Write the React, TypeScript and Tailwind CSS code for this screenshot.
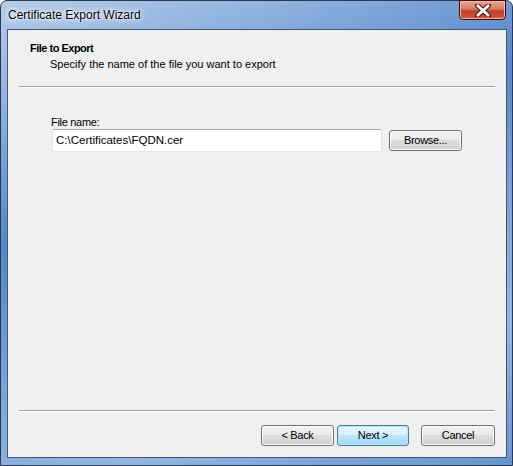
import React from "react";

const font = { fontFamily: '"Liberation Sans", Arial, sans-serif' };

function WinButton({ label, isDefault = false, className = "" }: { label: string; isDefault?: boolean; className?: string }) {
  return (
    <div
      className={
        "h-[21px] rounded-[3px] border flex items-center justify-center text-[11px] tracking-[-0.3px] text-black " +
        (isDefault
          ? "border-[#3c7fb1] shadow-[inset_0_0_0_1px_#b8e3fb] bg-[linear-gradient(#eaf6fd_0%,#d9f0fc_45%,#bee6fd_50%,#a7d9f5_100%)] "
          : "border-[#707070] shadow-[inset_0_0_0_1px_#fcfcfc] bg-[linear-gradient(#f2f2f2_0%,#ebebeb_45%,#dddddd_50%,#cfcfcf_100%)] ") +
        className
      }
    >
      {label}
    </div>
  );
}

export default function App() {
  return (
    <div className="w-[513px] h-[466px] bg-white" style={font}>
      <div className="w-[513px] h-[466px] flex flex-col rounded-t-[7px] border border-[#2b3a4f] bg-[linear-gradient(160deg,#b6cde9_0%,#8aaedd_18%,#5586c9_38%,#7aa1d8_58%,#94b5e2_78%,#6693d0_100%)] pl-[6px] pr-[5px] pb-[7px]">
        <div className="h-[28px] flex items-start shrink-0 relative">
          <div className="pl-[1px] pt-[7px] text-[12px] leading-[14px] text-black [text-shadow:0_0_8px_#ffffff,0_0_4px_#ffffff,0_0_2px_#ffffff]">
            Certificate Export Wizard
          </div>
          <div className="absolute right-[1px] top-[-1px] w-[47px] h-[20px] rounded-b-[4px] border border-[#3b0c06] bg-[linear-gradient(#e8a493_0%,#d77a65_45%,#c0402a_55%,#d2573e_100%)] shadow-[inset_0_0_0_1px_#f0b8a8] flex items-center justify-center">
            <svg width="16" height="13" viewBox="0 0 16 13">
              <path d="M2.5 1.5 L8 6.5 L13.5 1.5 M2.5 11.5 L8 6.5 L13.5 11.5" stroke="#4a1a12" strokeWidth="5" strokeLinecap="square" fill="none" />
              <path d="M3 2 L8 6.5 L13 2 M3 11 L8 6.5 L13 11" stroke="#ffffff" strokeWidth="2.8" strokeLinecap="square" fill="none" />
            </svg>
          </div>
        </div>
        <div className="flex-1 border border-[#44566e] bg-[#f0f0f0] flex flex-col">
          <div className="pl-[22px] pt-[10px] text-black">
            <div className="font-bold h-[16px] leading-[16px] text-[11px] tracking-[-0.5px]">File to Export</div>
            <div className="pl-[20px] h-[16px] leading-[16px] text-[11px]">Specify the name of the file you want to export</div>
          </div>
          <div className="mx-[11px] mt-[14px] h-[2px] border-t border-[#a0a0a0] border-b border-b-white" />
          <div className="pl-[43px] pt-[26px] text-[11px] tracking-[-0.3px] text-black leading-[16px]">File name:</div>
          <div className="flex items-start pl-[44px] -mt-[1px]">
            <div className="w-[330px] h-[23px] border border-[#abadb3] border-b-[#e3e9ef] border-l-[#e2e3ea] border-r-[#dbdfe6] rounded-[2px] bg-white flex items-center pl-[3px] text-[11.5px] text-black">
              C:\Certificates\FQDN.cer
            </div>
            <WinButton label="Browse..." className="w-[73px] ml-[7px] mt-[1px]" />
          </div>
          <div className="flex-1" />
          <div className="mx-[11px] h-[2px] border-t border-[#a0a0a0] border-b border-b-white" />
          <div className="flex justify-end pr-[11px] pt-[13px] pb-[11px]">
            <WinButton label="< Back" className="w-[73px]" />
            <WinButton label="Next >" isDefault className="w-[72px] ml-[3px]" />
            <WinButton label="Cancel" className="w-[74px] ml-[12px]" />
          </div>
        </div>
      </div>
    </div>
  );
}
